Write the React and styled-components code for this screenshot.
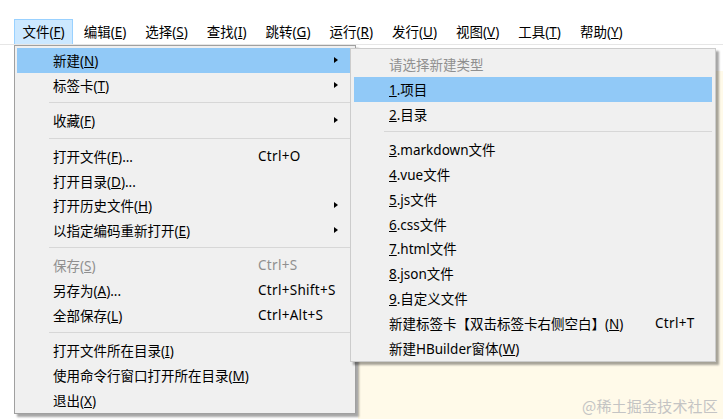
import styled, { createGlobalStyle } from "styled-components";

const GlobalStyle = createGlobalStyle`
  html, body {
    margin: 0;
    padding: 0;
    background: #ffffff;
  }
  body {
    font-family: "Noto Sans", "Noto Sans CJK SC", sans-serif;
    font-size: 13.5px;
    color: #000;
  }
`;

const Window = styled.div`
  position: relative;
  width: 723px;
  height: 419px;
  overflow: hidden;
  display: flex;
  flex-direction: column;
  background: #ffffff;
`;

const MenuBar = styled.div`
  display: flex;
  align-items: flex-end;
  height: 45px;
  padding-left: 14px;
  box-sizing: border-box;
  border-bottom: 1px solid #e6e6e6;
  background: #ffffff;
`;

const BarItem = styled.div`
  height: 25px;
  padding: 0 7.5px;
  margin-right: 2px;
  box-sizing: border-box;
  white-space: nowrap;
  line-height: 25px;
  background: ${(p) => (p.$open ? "#cce8ff" : "transparent")};
  border: 1px solid ${(p) => (p.$open ? "#99d1ff" : "transparent")};
  border-bottom: none;
`;

const Workspace = styled.div`
  flex: 1;
  display: flex;
`;

const Sidebar = styled.div`
  width: 358px;
  background: #ffffff;
`;

const EditorColumn = styled.div`
  flex: 1;
  display: flex;
  flex-direction: column;
`;

const TabStrip = styled.div`
  height: 26px;
  background: #ffffff;
`;

const Editor = styled.div`
  flex: 1;
  background: #fffae9;
`;

const Menu = styled.div`
  position: absolute;
  left: ${(p) => p.$left}px;
  top: ${(p) => p.$top}px;
  width: ${(p) => p.$width}px;
  box-sizing: border-box;
  padding: ${(p) => p.$pad}px;
  padding-bottom: 1px;
  background: #f0f0f0;
  border: 1px solid ${(p) => p.$border};
  box-shadow: 3px 3px 2px rgba(0, 0, 0, 0.35);
`;

const Row = styled.div`
  display: flex;
  align-items: center;
  height: 24.8px;
  padding-left: ${(p) => p.$indent}px;
  white-space: nowrap;
  color: ${(p) => (p.$disabled ? "#8f8f8f" : "#000")};
  background: ${(p) => (p.$active ? "#91c9f7" : "transparent")};
`;

const Label = styled.span`
  flex: 0 0 ${(p) => p.$width}px;
`;

const Shortcut = styled.span`
  flex: 1;
  letter-spacing: 0.3px;
`;

const Arrow = styled.span`
  width: 0;
  height: 0;
  margin-right: 15px;
  border-left: 4px solid #000;
  border-top: 3.5px solid transparent;
  border-bottom: 3.5px solid transparent;
`;

const Separator = styled.div`
  height: 10.5px;
  display: flex;
  align-items: center;
  padding-left: ${(p) => p.$indent}px;

  &::after {
    content: "";
    flex: 1;
    height: 1px;
    background: #d7d7d7;
  }
`;

const Watermark = styled.div`
  position: absolute;
  right: 5px;
  bottom: 3px;
  font-family: "Noto Sans CJK SC", sans-serif;
  font-size: 15px;
  color: #c4c4c4;
  letter-spacing: 0.2px;
`;

const barItems = [
  "文件(_F)",
  "编辑(_E)",
  "选择(_S)",
  "查找(_I)",
  "跳转(_G)",
  "运行(_R)",
  "发行(_U)",
  "视图(_V)",
  "工具(_T)",
  "帮助(_Y)",
];

const fileMenu = [
  { label: "新建(_N)", arrow: true, active: true },
  { label: "标签卡(_T)", arrow: true },
  { sep: true },
  { label: "收藏(_F)", arrow: true },
  { sep: true },
  { label: "打开文件(_F)...", shortcut: "Ctrl+O" },
  { label: "打开目录(_D)..." },
  { label: "打开历史文件(_H)", arrow: true },
  { label: "以指定编码重新打开(_E)", arrow: true },
  { sep: true },
  { label: "保存(_S)", shortcut: "Ctrl+S", disabled: true },
  { label: "另存为(_A)...", shortcut: "Ctrl+Shift+S" },
  { label: "全部保存(_L)", shortcut: "Ctrl+Alt+S" },
  { sep: true },
  { label: "打开文件所在目录(_I)" },
  { label: "使用命令行窗口打开所在目录(_M)" },
  { label: "退出(_X)" },
];

const newMenu = [
  { label: "请选择新建类型", disabled: true },
  { label: "_1.项目", active: true },
  { label: "_2.目录" },
  { sep: true },
  { label: "_3.markdown文件" },
  { label: "_4.vue文件" },
  { label: "_5.js文件" },
  { label: "_6.css文件" },
  { label: "_7.html文件" },
  { label: "_8.json文件" },
  { label: "_9.自定义文件" },
  { label: "新建标签卡【双击标签卡右侧空白】(_N)", shortcut: "Ctrl+T" },
  { label: "新建HBuilder窗体(_W)" },
];

// "_X" marks the access key that gets underlined
function Mnemonic({ text }) {
  const parts = text.split(/_(.)/);
  return parts.map((part, i) =>
    i % 2 === 1 ? <u key={i}>{part}</u> : <span key={i}>{part}</span>
  );
}

function MenuList({ items, indent, labelWidth, sepIndent }) {
  return items.map((item, i) =>
    item.sep ? (
      <Separator key={i} $indent={sepIndent} />
    ) : (
      <Row
        key={i}
        $indent={indent}
        $active={item.active}
        $disabled={item.disabled}
      >
        <Label $width={labelWidth}>
          <Mnemonic text={item.label} />
        </Label>
        <Shortcut>{item.shortcut}</Shortcut>
        {item.arrow && <Arrow />}
      </Row>
    )
  );
}

export default function App() {
  return (
    <>
      <GlobalStyle />
      <Window>
        <MenuBar>
          {barItems.map((item, i) => (
            <BarItem key={item} $open={i === 0}>
              <Mnemonic text={item} />
            </BarItem>
          ))}
        </MenuBar>
        <Workspace>
          <Sidebar />
          <EditorColumn>
            <TabStrip />
            <Editor />
          </EditorColumn>
        </Workspace>

        <Menu $left={14} $top={45} $width={342} $pad={2} $border="#a0a0a0">
          <MenuList items={fileMenu} indent={36} labelWidth={205} sepIndent={32} />
        </Menu>

        <Menu $left={350} $top={48} $width={366} $pad={3} $border="#cccccc">
          <MenuList items={newMenu} indent={35} labelWidth={266} sepIndent={30} />
        </Menu>

        <Watermark>@稀土掘金技术社区</Watermark>
      </Window>
    </>
  );
}
